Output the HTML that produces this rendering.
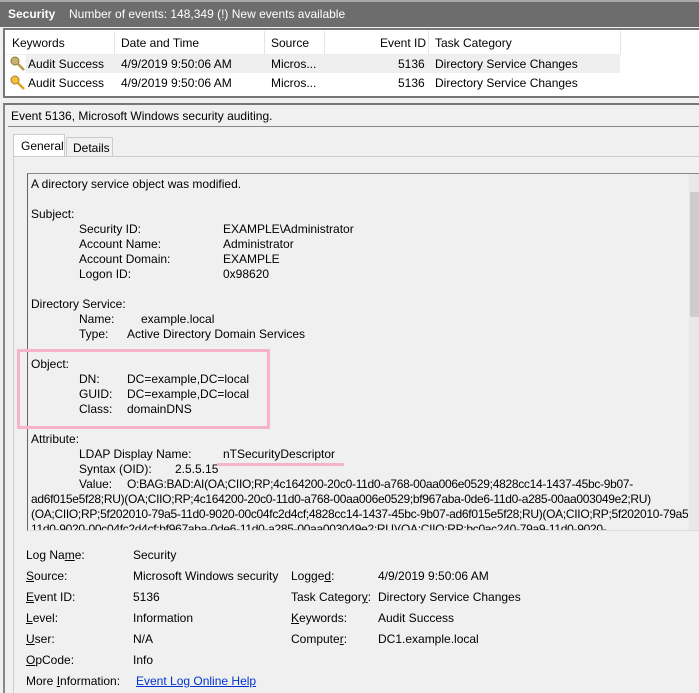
<!DOCTYPE html>
<html><head><style>
*{margin:0;padding:0;box-sizing:border-box}
body{width:699px;height:693px;background:#f0f0f0;font-family:"Liberation Sans",sans-serif;font-size:12px;color:#000;position:relative;overflow:hidden}
.a{position:absolute;white-space:nowrap;line-height:15px}
.ul{text-decoration:underline}
.t{letter-spacing:-0.3px}
</style></head><body>
<div class="a" style="left:0;top:0;width:699px;height:27px;background:#6d6d6d;border-top:2px solid #aaa"></div>
<div class="a" style="left:8px;top:7px;color:#fff;font-weight:bold;font-size:12px">Security</div>
<div class="a" style="left:69px;top:7px;color:#fff">Number of events: 148,349 (!) New events available</div>
<div class="a" style="left:3px;top:28px;width:696px;height:70px;background:#fff;border:2px solid #777;border-right:none"></div>
<div class="a" style="left:5px;top:30px;width:615px;height:25px;border-bottom:1px solid #eee"></div>
<div class="a" style="left:114px;top:31px;width:1px;height:24px;background:#e5e5e5"></div>
<div class="a" style="left:264px;top:31px;width:1px;height:24px;background:#e5e5e5"></div>
<div class="a" style="left:324px;top:31px;width:1px;height:24px;background:#e5e5e5"></div>
<div class="a" style="left:428px;top:31px;width:1px;height:24px;background:#e5e5e5"></div>
<div class="a" style="left:620px;top:31px;width:1px;height:24px;background:#e5e5e5"></div>
<div class="a" style="left:12px;top:36px">Keywords</div>
<div class="a" style="left:121px;top:36px">Date and Time</div>
<div class="a" style="left:271px;top:36px">Source</div>
<div class="a" style="left:380px;top:36px">Event ID</div>
<div class="a" style="left:435px;top:36px">Task Category</div>
<div class="a" style="left:26px;top:55px;width:594px;height:18px;background:#efefef"></div>
<svg class="a" style="left:9px;top:55px" width="18" height="18"><circle cx="6" cy="6" r="4" fill="#c9b36a" stroke="#8a7a40"/><line x1="9" y1="9" x2="15" y2="15" stroke="#b89a40" stroke-width="2.5"/></svg>
<svg class="a" style="left:9px;top:74px" width="18" height="18"><circle cx="6" cy="6" r="4" fill="#f0c040" stroke="#b08020"/><line x1="9" y1="9" x2="15" y2="15" stroke="#e0a020" stroke-width="2.5"/></svg>
<div class="a" style="left:28px;top:57px">Audit Success</div>
<div class="a" style="left:121px;top:57px">4/9/2019 9:50:06 AM</div>
<div class="a" style="left:271px;top:57px">Micros...</div>
<div class="a" style="left:398px;top:57px">5136</div>
<div class="a" style="left:435px;top:57px">Directory Service Changes</div>
<div class="a" style="left:28px;top:76px">Audit Success</div>
<div class="a" style="left:121px;top:76px">4/9/2019 9:50:06 AM</div>
<div class="a" style="left:271px;top:76px">Micros...</div>
<div class="a" style="left:398px;top:76px">5136</div>
<div class="a" style="left:435px;top:76px">Directory Service Changes</div>
<div class="a" style="left:3px;top:103px;width:696px;height:590px;border-top:2px solid #777;border-left:2px solid #888"></div>
<div class="a" style="left:11px;top:109px">Event 5136, Microsoft Windows security auditing.</div>
<div class="a" style="left:8px;top:126px;width:691px;height:1px;background:#888"></div>
<div class="a" style="left:13px;top:134px;width:52px;height:22px;background:#fff;border:1px solid #ccc;border-bottom:none"></div>
<div class="a" style="left:21px;top:139px">General</div>
<div class="a" style="left:66px;top:137px;width:47px;height:19px;border:1px solid #ccc;border-bottom:none"></div>
<div class="a" style="left:73px;top:141px">Details</div>
<div class="a" style="left:13px;top:156px;width:686px;height:537px;border-left:1px solid #ccc;border-top:1px solid #ccc"></div>
<div class="a" style="left:27px;top:173px;width:672px;height:358px;border-left:1px solid #666;border-top:1px solid #888;border-bottom:1px solid #ddd"></div>
<div class="a" style="left:689px;top:174px;width:10px;height:356px;background:#e8e8e8"></div>
<div class="a" style="left:690px;top:192px;width:9px;height:125px;background:#cdcdcd"></div>
<div style="position:absolute;left:31px;top:177px;width:657px;height:353px;overflow:hidden">
<div class="a" style="left:0;top:0">A directory service object was modified.</div>
<div class="a" style="left:0;top:30px">Subject:</div>
<div class="a" style="left:48px;top:45px">Security ID:</div><div class="a" style="left:192px;top:45px">EXAMPLE\Administrator</div>
<div class="a" style="left:48px;top:60px">Account Name:</div><div class="a" style="left:192px;top:60px">Administrator</div>
<div class="a" style="left:48px;top:75px">Account Domain:</div><div class="a" style="left:192px;top:75px">EXAMPLE</div>
<div class="a" style="left:48px;top:90px">Logon ID:</div><div class="a" style="left:192px;top:90px">0x98620</div>
<div class="a" style="left:0;top:120px">Directory Service:</div>
<div class="a" style="left:48px;top:135px">Name:</div><div class="a" style="left:110px;top:135px">example.local</div>
<div class="a" style="left:48px;top:150px">Type:</div><div class="a" style="left:96px;top:150px">Active Directory Domain Services</div>
<div class="a" style="left:0;top:180px">Object:</div>
<div class="a" style="left:48px;top:195px">DN:</div><div class="a" style="left:96px;top:195px">DC=example,DC=local</div>
<div class="a" style="left:48px;top:210px">GUID:</div><div class="a" style="left:96px;top:210px">DC=example,DC=local</div>
<div class="a" style="left:48px;top:225px">Class:</div><div class="a" style="left:96px;top:225px">domainDNS</div>
<div class="a" style="left:0;top:255px">Attribute:</div>
<div class="a" style="left:48px;top:270px">LDAP Display Name:</div><div class="a" style="left:192px;top:270px">nTSecurityDescriptor</div>
<div class="a" style="left:48px;top:285px">Syntax (OID):</div><div class="a" style="left:144px;top:285px">2.5.5.15</div>
<div class="a" style="left:48px;top:300px">Value:</div><div class="a t" style="left:96px;top:300px">O:BAG:BAD:AI(OA;CIIO;RP;4c164200-20c0-11d0-a768-00aa006e0529;4828cc14-1437-45bc-9b07-</div>
<div class="a t" style="left:0;top:315px">ad6f015e5f28;RU)(OA;CIIO;RP;4c164200-20c0-11d0-a768-00aa006e0529;bf967aba-0de6-11d0-a285-00aa003049e2;RU)</div>
<div class="a t" style="left:0;top:330px">(OA;CIIO;RP;5f202010-79a5-11d0-9020-00c04fc2d4cf;4828cc14-1437-45bc-9b07-ad6f015e5f28;RU)(OA;CIIO;RP;5f202010-79a5-</div>
<div class="a t" style="left:0;top:345px">11d0-9020-00c04fc2d4cf;bf967aba-0de6-11d0-a285-00aa003049e2;RU)(OA;CIIO;RP;bc0ac240-79a9-11d0-9020-</div>
</div>
<div class="a" style="left:17px;top:349px;width:253px;height:80px;border:3px solid #f7b3cc"></div>
<div class="a" style="left:217px;top:463px;width:127px;height:3px;background:#f7b3cc;border-radius:2px"></div>
<div class="a" style="left:26px;top:548px">Log Na<span class="ul">m</span>e:</div><div class="a" style="left:133px;top:548px">Security</div>
<div class="a" style="left:26px;top:569px"><span class="ul">S</span>ource:</div><div class="a" style="left:133px;top:569px">Microsoft Windows security</div>
<div class="a" style="left:291px;top:569px">Logge<span class="ul">d</span>:</div><div class="a" style="left:378px;top:569px">4/9/2019 9:50:06 AM</div>
<div class="a" style="left:26px;top:590px"><span class="ul">E</span>vent ID:</div><div class="a" style="left:133px;top:590px">5136</div>
<div class="a" style="left:291px;top:590px">Task Categor<span class="ul">y</span>:</div><div class="a" style="left:378px;top:590px">Directory Service Changes</div>
<div class="a" style="left:26px;top:611px"><span class="ul">L</span>evel:</div><div class="a" style="left:133px;top:611px">Information</div>
<div class="a" style="left:291px;top:611px"><span class="ul">K</span>eywords:</div><div class="a" style="left:378px;top:611px">Audit Success</div>
<div class="a" style="left:26px;top:632px"><span class="ul">U</span>ser:</div><div class="a" style="left:133px;top:632px">N/A</div>
<div class="a" style="left:291px;top:632px">Compute<span class="ul">r</span>:</div><div class="a" style="left:378px;top:632px">DC1.example.local</div>
<div class="a" style="left:26px;top:653px"><span class="ul">O</span>pCode:</div><div class="a" style="left:133px;top:653px">Info</div>
<div class="a" style="left:26px;top:674px">More <span class="ul">I</span>nformation:</div><div class="a" style="left:136px;top:674px;color:#0033cc;text-decoration:underline">Event Log Online Help</div>
</body></html>
